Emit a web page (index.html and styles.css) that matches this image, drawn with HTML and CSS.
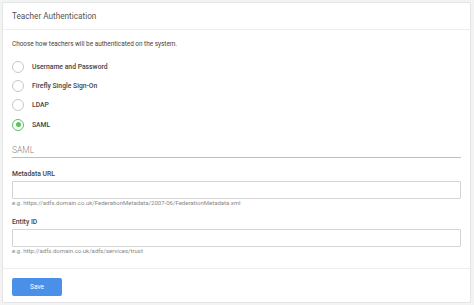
FILE: index.html
```html
<!DOCTYPE html>
<html lang="en">
<head>
  <meta charset="UTF-8" />
  <title>Teacher Authentication</title>
  <link rel="stylesheet" href="styles.css">
</head>
<body>
  <div class="card">
    <div class="card-header">Teacher Authentication</div>

    <div class="card-body">
      <p class="intro">Choose how teachers will be authenticated on the system.</p>

      <div class="radios">
        <label class="radio"><span class="dot"></span>Username and Password</label>
        <label class="radio"><span class="dot"></span>Firefly Single Sign-On</label>
        <label class="radio"><span class="dot"></span>LDAP</label>
        <label class="radio checked"><span class="dot"></span>SAML</label>
      </div>

      <h3 class="section">SAML</h3>

      <div class="field">
        <label class="field-label" for="metadata-url">Metadata URL</label>
        <input type="text" id="metadata-url" class="input" />
        <div class="hint">e.g. https://adfs.domain.co.uk/FederationMetadata/2007-06/FederationMetadata.xml</div>
      </div>

      <div class="field">
        <label class="field-label" for="entity-id">Entity ID</label>
        <input type="text" id="entity-id" class="input" />
        <div class="hint">e.g. http://adfs.domain.co.uk/adfs/services/trust</div>
      </div>
    </div>

    <div class="card-footer">
      <button class="btn">Save</button>
    </div>
  </div>
</body>
</html>
```

FILE: styles.css
```css
* { margin:0; padding:0; box-sizing:border-box; font-family:Roboto, 'Liberation Sans', sans-serif; }
body { background:#f3f3f3; padding:2px 3px 3px 2px; }

.card {
  background:#fff; border:1px solid #e4e4e4; border-radius:2px;
}
.card-header {
  height:27px; line-height:26px; padding:0 9px;
  font-size:8.2px; color:#555;
  border-bottom:1px solid #eee;
}

.card-body { padding:9px 9px 13px; }
.intro { font-size:6.4px; color:#444; line-height:10px; }

.radios { margin-top:8px; }
.radio {
  display:flex; align-items:center; height:19.3px;
  font-size:6.8px; font-weight:500; color:#444;
}
.dot {
  width:12px; height:12px; border-radius:50%;
  border:1px solid #c8c8c8; margin-right:8px; position:relative;
}
.radio.checked .dot { border-color:#5cc25f; }
.radio.checked .dot::after {
  content:''; position:absolute; left:2.5px; top:2.5px;
  width:5px; height:5px; border-radius:50%; background:#5cc25f;
}

.section {
  margin-top:11px; font-size:8.5px; font-weight:300; color:#888;
  padding-bottom:2px; border-bottom:1px solid #9fd49f; line-height:10px;
}

.field { margin-top:11px; }
.field + .field { margin-top:10px; }
.field-label { display:block; font-size:6.8px; font-weight:500; color:#444; line-height:10px; }
.input {
  display:block; width:100%; height:18px; margin-top:2px;
  border:1px solid #d4d4d4; border-radius:1px; background:#fff;
}
.hint { font-size:6px; color:#888; line-height:8px; }

.card-footer { border-top:1px solid #eee; padding:5px 9px 6px; }
.btn {
  width:50px; height:18px; border:none; border-radius:2px;
  background:#4a90e8; color:#fff; font-size:6.5px;
}
```
